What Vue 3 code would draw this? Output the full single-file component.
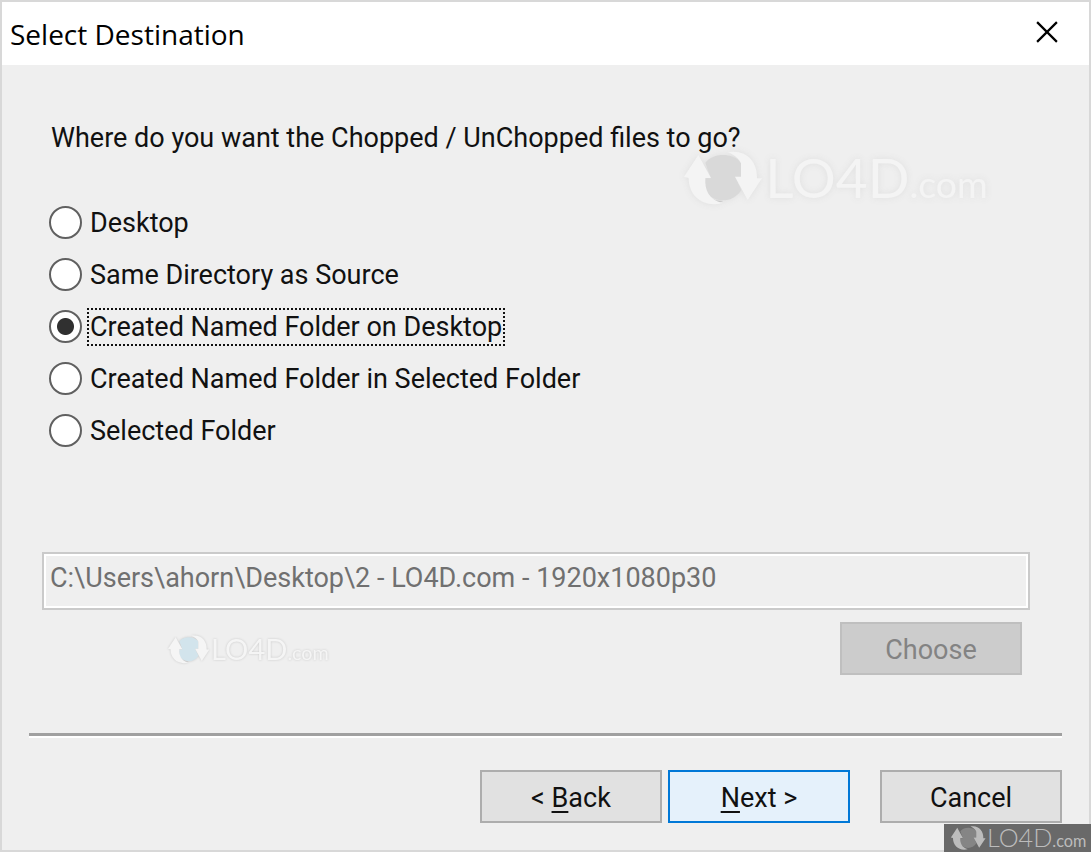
<script setup>
import { ref } from 'vue'

const choice = ref('named-desktop')
const path = ref('C:\\Users\\ahorn\\Desktop\\2 - LO4D.com - 1920x1080p30')
const options = [
  { id: 'desktop', label: 'Desktop' },
  { id: 'source', label: 'Same Directory as Source' },
  { id: 'named-desktop', label: 'Created Named Folder on Desktop' },
  { id: 'named-selected', label: 'Created Named Folder in Selected Folder' },
  { id: 'selected', label: 'Selected Folder' }
]
const marks = ['large', 'small', 'corner']
</script>

<template>
  <main class="dialog">
    <header class="titlebar">
      <h1>Select Destination</h1>
      <button class="close" type="button" aria-label="Close">
        <svg viewBox="0 0 20 20" aria-hidden="true"><path d="M1 1L19 19M19 1L1 19" /></svg>
      </button>
    </header>

    <form class="body" @submit.prevent>
      <fieldset class="choices">
        <legend>Where do you want the Chopped / UnChopped files to go?</legend>
        <label v-for="o in options" :key="o.id" class="option">
          <input v-model="choice" type="radio" name="destination" :value="o.id" />
          <span :class="{ focused: choice === o.id }">{{ o.label }}</span>
        </label>
      </fieldset>

      <div class="folder">
        <input v-model="path" class="path" type="text" aria-label="Destination folder" disabled />
        <button class="btn choose" type="button" disabled>Choose</button>
      </div>

      <footer class="actions">
        <button class="btn" type="button"><span>&lt; <u>B</u>ack</span></button>
        <button class="btn primary" type="submit"><span><u>N</u>ext &gt;</span></button>
        <button class="btn cancel" type="button">Cancel</button>
      </footer>
    </form>

    <div v-for="m in marks" :key="m" class="mark" :class="m">
      <svg viewBox="66 117 918 174" role="img" aria-label="LO4D.com">
        <g class="glyph">
          <path class="ball" d="M136 158C160 127 218 127 243 158V200H225L244 240C218 282 160 280 136 242V205H153Z" />
          <path class="shade" d="M136 243C146 264 162 273 190 273L176 279C150 277 136 264 136 243Z" />
          <path class="arrow" d="M115 135L153 204H136C133 240 148 270 187 279C132 294 86 260 86 204L72 200Z" />
          <path class="arrow" d="M204 127C258 117 293 155 291 205H306L263 270L225 200H243V160C235 144 220 133 204 127Z" />
        </g>
        <text class="word" x="316" y="263">LO4D<tspan class="suffix">.com</tspan></text>
      </svg>
    </div>
  </main>
</template>

<style>
body { margin: 0; }
</style>

<style scoped>
* { box-sizing: border-box; }
.dialog {
  position: relative;
  display: flex;
  flex-direction: column;
  min-height: 100vh;
  border: 2px solid #d8d8d8;
  background: #efefef;
  color: #111;
  font-family: Roboto, "Liberation Sans", sans-serif;
  font-size: 27px;
  line-height: 36px;
}
.titlebar {
  display: flex;
  align-items: center;
  justify-content: space-between;
  height: 63px;
  padding: 0 31px 0 8px;
  background: #fff;
  color: #000;
}
h1 {
  margin: 0;
  font: 400 28px/40px "Open Sans", "Noto Sans", sans-serif;
}
button, input { font: inherit; color: inherit; margin: 0; }
.close {
  display: flex;
  padding: 0 0 4px;
  border: 0;
  background: none;
}
.close svg { width: 22px; height: 22px; }
.close path { fill: none; stroke: #000; stroke-width: 2; }
.body {
  display: flex;
  flex: 1;
  flex-direction: column;
  padding: 55px 27px 27px;
}
.choices {
  margin: 0;
  padding: 0 0 0 20px;
  border: 0;
  min-width: 0;
}
legend { padding: 0 0 0 2px; margin-bottom: 40px; }
.option {
  display: flex;
  align-items: center;
  gap: 5px;
  height: 52px;
}
.option input {
  appearance: none;
  width: 33px;
  height: 33px;
  border: 2px solid #606060;
  border-radius: 50%;
  background: #fff;
}
.option input:checked { background: radial-gradient(circle, #303030 8px, #fff 9px); }
.option span { margin-top: 2px; padding: 0 1px; border: 2px dotted transparent; line-height: 34px; }
.option .focused { border-color: #111; }
.folder {
  display: flex;
  flex-direction: column;
  margin: auto 32px 58px 13px;
}
.path {
  width: 100%;
  height: 58px;
  padding: 0 6px 7px;
  border: 2px solid #cacaca;
  outline: 2px solid #fff;
  outline-offset: -4px;
  border-radius: 0;
  background: #efefef;
  color: #707070;
}
.btn {
  width: 182px;
  height: 53px;
  padding: 2px 0 0;
  border: 2px solid #adadad;
  border-radius: 0;
  background: #e1e1e1;
}
.btn u { text-decoration-thickness: 2px; text-underline-offset: 4px; }
.choose {
  align-self: flex-end;
  margin: 12px 8px 0 0;
  border-color: #bfbfbf;
  background: #ccc;
  color: #838383;
}
.primary { border-color: #0078d7; background: #e5f1fb; }
.cancel { margin-left: 24px; }
.actions {
  display: flex;
  justify-content: flex-end;
  gap: 6px;
  padding-top: 34px;
  border-top: 3px solid #a0a0a0;
  box-shadow: inset 0 2px #fff;
}
.mark { position: absolute; display: flex; pointer-events: none; }
.mark svg { width: 100%; overflow: visible; }
.word, .suffix { font-family: Lato, sans-serif; font-weight: 400; }
.word { font-size: 165px; }
.suffix { font-size: 112px; }
.large { top: 147px; left: 680px; width: 306px; }
.large svg { filter: drop-shadow(0 0 3px #dedede); }
.large .arrow, .large text { fill: #f4f4f4; }
.large .ball { fill: #d9d9d9; }
.large .shade { fill: #cacaca; }
.small { top: 632px; left: 165px; width: 162px; }
.small svg { filter: drop-shadow(0 0 1px #c8c8c8); }
.small .arrow, .small text { fill: #f5f5f5; }
.small .ball { fill: #d2e4ec; }
.small .shade { fill: #c4c4c4; }
.corner {
  right: -2px;
  bottom: -2px;
  width: 147px;
  height: 28px;
  padding: 1px 5px 1px 6px;
  background: #696969;
}
.corner .word { font-weight: 300; font-size: 170px; }
.corner .suffix { font-size: 110px; }
.corner .arrow, .corner text { fill: #bcbcbc; }
.corner .ball { fill: #858585; }
.corner .shade { fill: #606060; }
</style>
